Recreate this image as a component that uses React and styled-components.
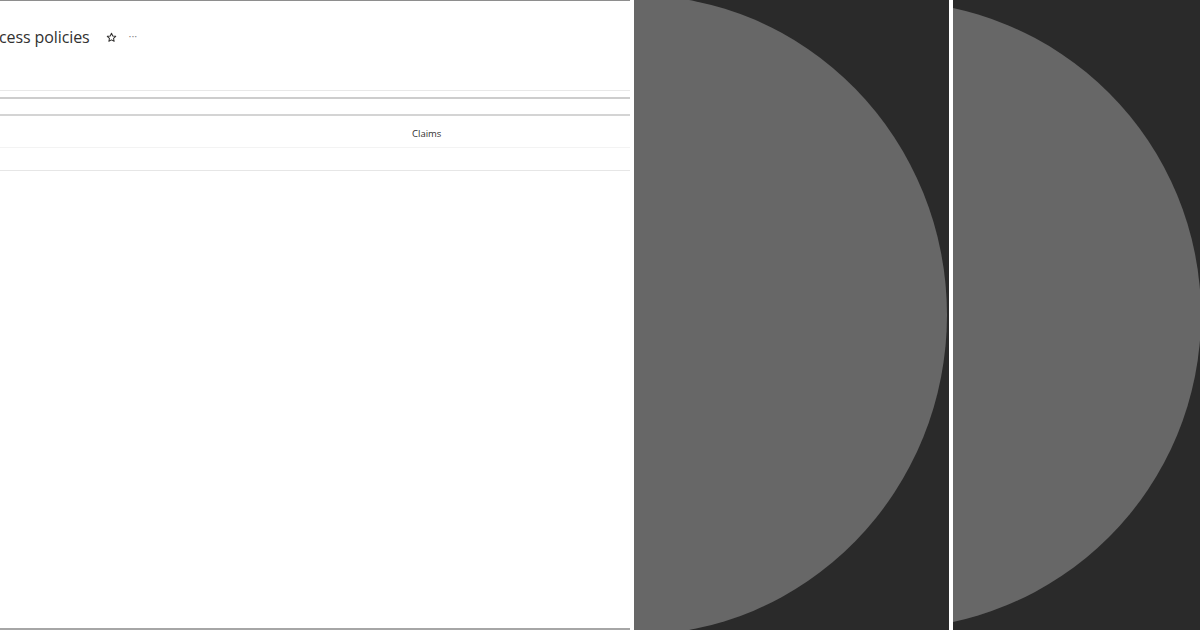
import React from 'react'
import styled, { createGlobalStyle } from 'styled-components'

const GlobalStyle = createGlobalStyle`
    html, body {
        margin: 0;
        padding: 0;
        background: #ffffff;
        overflow: hidden;
    }
    body {
        font-family: "Open Sans", "Noto Sans", "Liberation Sans", sans-serif;
        color: #323130;
    }
`

function StarIcon() {
    return (
        <svg width="11" height="11" viewBox="0 0 24 24" fill="none" stroke="#323130" strokeWidth="2.2" strokeLinejoin="round">
            <path d="M12 2.8l2.8 6 6.4.7-4.8 4.4 1.4 6.4L12 17.1l-5.8 3.2 1.4-6.4-4.8-4.4 6.4-.7z" />
        </svg>
    )
}

function HalfMoon({ width, cx, rx, ry }) {
    return (
        <svg width={width} height="630" viewBox={`0 0 ${width} 630`}>
            <ellipse cx={cx} cy="315" rx={rx} ry={ry} fill="#676767" />
        </svg>
    )
}

function App() {
    return (
        <Page>
            <GlobalStyle />
            <Blade>
                <Header>
                    <Title>cess policies</Title>
                    <IconButton><StarIcon /></IconButton>
                    <More>···</More>
                </Header>
                <Rule $color="#e8e8e8" />
                <Spacer $h={6} />
                <Rule $color="#cdcdcd" $w={2} />
                <Spacer $h={15} />
                <Rule $color="#d4d4d4" $w={2} />
                <TableRow $h={31}>
                    <Cell />
                    <HeadCell>Claims</HeadCell>
                </TableRow>
                <Rule $color="#f3f3f3" />
                <TableRow $h={22} />
                <Rule $color="#e6e6e6" />
                <Fill />
            </Blade>
            <Gap $w={4} />
            <Panel $w={315}>
                <HalfMoon width={315} cx={0} rx={313} ry={320} />
            </Panel>
            <Gap $w={4} />
            <Panel $w={247}>
                <HalfMoon width={247} cx={-66} rx={314} ry={314} />
            </Panel>
        </Page>
    )
}

export default App

const Page = styled.div`
    display: flex;
    width: 1200px;
    height: 630px;
    overflow: hidden;
`

const Blade = styled.section`
    width: 630px;
    flex: none;
    display: flex;
    flex-direction: column;
    box-sizing: border-box;
    border-top: 1px solid #8e8e8e;
    border-bottom: 2px solid #a6a6a6;
    background: #ffffff;
`

const Header = styled.div`
    height: 89px;
    display: flex;
    align-items: flex-start;
    padding-top: 25px;
    box-sizing: border-box;
`

const Title = styled.h1`
    margin: 0 0 0 -1px;
    font-size: 16px;
    font-weight: 400;
    line-height: 22px;
    color: #323130;
    letter-spacing: -0.1px;
`

const IconButton = styled.span`
    display: flex;
    align-items: center;
    justify-content: center;
    margin-left: 16px;
    margin-top: 6px;
`

const More = styled.span`
    margin-left: 12px;
    margin-top: 2px;
    font-size: 11px;
    line-height: 16px;
    color: #8a8886;
    letter-spacing: 0;
`

const Rule = styled.div`
    height: ${p => p.$w || 1}px;
    background: ${p => p.$color};
    flex: none;
`

const Spacer = styled.div`
    height: ${p => p.$h}px;
    flex: none;
`

const TableRow = styled.div`
    display: grid;
    grid-template-columns: 412px 1fr;
    align-items: center;
    height: ${p => p.$h}px;
    flex: none;
`

const Cell = styled.div``

const HeadCell = styled.div`
    font-size: 9.5px;
    color: #323130;
    padding-top: 3px;
`

const Fill = styled.div`
    flex: 1;
`

const Gap = styled.div`
    width: ${p => p.$w}px;
    flex: none;
    background: #ffffff;
`

const Panel = styled.div`
    width: ${p => p.$w}px;
    flex: none;
    height: 630px;
    background: #2a2a2a;
    overflow: hidden;
    svg {
        display: block;
    }
`
